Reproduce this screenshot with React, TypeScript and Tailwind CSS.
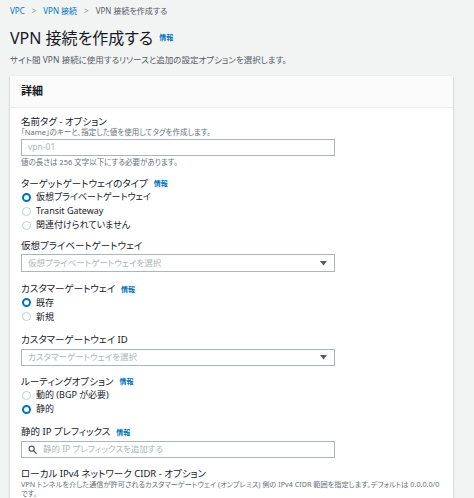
import React from "react";

const Info = () => (
  <span className="ml-[6px] text-[7px] font-bold text-[#0073bb] align-middle">情報</span>
);

const Radio = ({ checked, label }: { checked?: boolean; label: string }) => (
  <div className="flex items-center h-[14px]">
    <span
      className={
        checked
          ? "box-border w-[9px] h-[9px] rounded-full border-[2.5px] border-[#0073bb] bg-white"
          : "box-border w-[9px] h-[9px] rounded-full border border-[#c5cccd] bg-white"
      }
    />
    <span className="ml-[5px] text-[9px] leading-[14px] text-[#16191f]">{label}</span>
  </div>
);

const Label = ({ children, cls }: { children: React.ReactNode; cls: string }) => (
  <div className={"text-[9.5px] leading-[12px] text-[#16191f] " + cls}>{children}</div>
);

const Select = ({ placeholder, cls }: { placeholder: string; cls: string }) => (
  <div
    className={
      "flex items-center justify-between w-[314px] border border-[#aab7b8] bg-white pl-[6px] pr-[7px] " + cls
    }
  >
    <span className="text-[8.5px] text-[#aab7b8]">{placeholder}</span>
    <svg width="7" height="5" viewBox="0 0 7 5">
      <path d="M0 0 L7 0 L3.5 4.5 Z" fill="#545b64" />
    </svg>
  </div>
);

export default function App() {
  return (
    <div
      className="w-[474px] h-[498px] overflow-hidden bg-[#f2f3f3] [font-feature-settings:'palt'] text-[#16191f]"
      style={{ fontFamily: "'Noto Sans', 'Noto Sans CJK JP', sans-serif" }}
    >
      <div className="pl-[10px]">
        <div className="pt-[6px] leading-[10px] text-[8px] flex items-center">
          <span className="text-[#0073bb]">VPC</span>
          <span className="mx-[7px] text-[#879596]">&gt;</span>
          <span className="text-[#0073bb]">VPN 接続</span>
          <span className="mx-[7px] text-[#879596]">&gt;</span>
          <span className="text-[#545b64]">VPN 接続を作成する</span>
        </div>
        <div className="mt-[12px] leading-[20px] flex items-center">
          <span className="text-[16px] font-normal text-[#16191f]">VPN 接続を作成する</span>
          <Info />
        </div>
        <div className="mt-[7px] leading-[10px] text-[8.5px] text-[#545b64]">
          サイト間 VPN 接続に使用するリソースと追加の設定オプションを選択します。
        </div>
      </div>

      <div className="mt-[11px] ml-[10px] w-[443px] bg-white shadow-[0_1px_2px_rgba(0,28,36,0.3)] h-[430px]">
        <div className="h-[32px] flex items-center pl-[11px] bg-[#fafafa] border-b border-[#eaeded]">
          <span className="text-[11px] font-bold text-[#16191f]">詳細</span>
        </div>
        <div className="pl-[11px] pr-[11px]">
          <Label cls="pt-[8px]">名前タグ - オプション</Label>
          <div className="text-[7.5px] leading-[9px] text-[#687078]">
            「Name」のキーと、指定した値を使用してタグを作成します。
          </div>
          <div className="mt-[2px] h-[17px] w-[314px] border border-[#aab7b8] flex items-center pl-[6px]">
            <span className="text-[8.5px] text-[#aab7b8]">vpn-01</span>
          </div>
          <div className="mt-[2px] text-[7.5px] leading-[9px] text-[#687078]">
            値の長さは 256 文字以下にする必要があります。
          </div>

          <Label cls="mt-[11px]">
            ターゲットゲートウェイのタイプ
            <Info />
          </Label>
          <div className="pl-[1px]">
            <Radio checked label="仮想プライベートゲートウェイ" />
            <Radio label="Transit Gateway" />
            <Radio label="関連付けられていません" />
          </div>

          <Label cls="mt-[8px]">仮想プライベートゲートウェイ</Label>
          <Select cls="mt-[2px] h-[18px]" placeholder="仮想プライベートゲートウェイを選択" />

          <Label cls="mt-[11px]">
            カスタマーゲートウェイ
            <Info />
          </Label>
          <div className="pl-[1px]">
            <Radio checked label="既存" />
            <Radio label="新規" />
          </div>

          <Label cls="mt-[10px]">カスタマーゲートウェイ ID</Label>
          <Select cls="mt-[3px] h-[17px]" placeholder="カスタマーゲートウェイを選択" />

          <Label cls="mt-[10px]">
            ルーティングオプション
            <Info />
          </Label>
          <div className="pl-[1px]">
            <Radio label="動的 (BGP が必要)" />
            <Radio checked label="静的" />
          </div>

          <Label cls="mt-[10px]">
            静的 IP プレフィックス
            <Info />
          </Label>
          <div className="mt-[2px] h-[17px] w-[314px] border border-[#aab7b8] flex items-center pl-[6px]">
            <svg width="9" height="9" viewBox="0 0 16 16" fill="none">
              <circle cx="6.5" cy="6.5" r="4.5" stroke="#545b64" strokeWidth="2.2" />
              <path d="M10 10 L14.5 14.5" stroke="#545b64" strokeWidth="2.4" strokeLinecap="round" />
            </svg>
            <span className="ml-[6px] text-[8.5px] text-[#aab7b8]">静的 IP プレフィックスを追加する</span>
          </div>

          <Label cls="mt-[10px]">ローカル IPv4 ネットワーク CIDR - オプション</Label>
          <div className="text-[7.2px] leading-[9px] text-[#687078]">
            <span className="whitespace-nowrap">
              VPN トンネルを介した通信が許可されるカスタマーゲートウェイ (オンプレミス) 側の IPv4 CIDR 範囲を指定します。デフォルトは 0.0.0.0/0
            </span>
            <br />
            です。
          </div>
        </div>
      </div>
    </div>
  );
}
